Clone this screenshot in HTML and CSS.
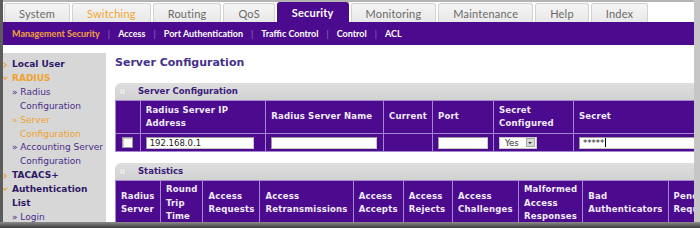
FILE: index.html
```html
<!DOCTYPE html>
<html>
<head>
<meta charset="utf-8">
<link rel="stylesheet" href="styles.css">
</head>
<body>
<div class="frame">
  <nav class="tabs">
    <span class="tab">System</span>
    <span class="tab tab-hot">Switching</span>
    <span class="tab">Routing</span>
    <span class="tab">QoS</span>
    <span class="tab tab-active">Security</span>
    <span class="tab">Monitoring</span>
    <span class="tab">Maintenance</span>
    <span class="tab">Help</span>
    <span class="tab">Index</span>
  </nav>
  <nav class="subnav">
    <span class="sub sub-active">Management Security</span><span class="sep">|</span>
    <span class="sub">Access</span><span class="sep">|</span>
    <span class="sub">Port Authentication</span><span class="sep">|</span>
    <span class="sub">Traffic Control</span><span class="sep">|</span>
    <span class="sub">Control</span><span class="sep">|</span>
    <span class="sub">ACL</span>
  </nav>
  <div class="body">
    <aside class="side">
      <div class="l1"><span class="arr arr-r"></span><span>Local User</span></div>
      <div class="l1 on"><span class="arr arr-d"></span><span>RADIUS</span></div>
      <div class="l2">» Radius Configuration</div>
      <div class="l2 on">» Server Configuration</div>
      <div class="l2">» Accounting Server Configuration</div>
      <div class="l1"><span class="arr arr-r"></span><span>TACACS+</span></div>
      <div class="l1"><span class="arr arr-d"></span><span>Authentication List</span></div>
      <div class="l2">» Login</div>
    </aside>
    <main class="main">
      <h1 class="title">Server Configuration</h1>
      <section class="box">
        <div class="box-head"><span class="grip"></span>Server Configuration</div>
        <table class="grid cfg">
          <colgroup>
            <col class="c-chk"><col class="c-ip"><col class="c-name"><col class="c-cur"><col class="c-port"><col class="c-sc"><col class="c-sec">
          </colgroup>
          <thead>
            <tr>
              <th></th>
              <th>Radius Server IP Address</th>
              <th>Radius Server Name</th>
              <th>Current</th>
              <th>Port</th>
              <th>Secret Configured</th>
              <th>Secret</th>
            </tr>
          </thead>
          <tbody>
            <tr class="row">
              <td class="center"><input type="checkbox" class="chk"></td>
              <td><span class="field f-ip">192.168.0.1</span></td>
              <td><span class="field f-name"></span></td>
              <td></td>
              <td><span class="field f-port"></span></td>
              <td><span class="select"><span class="sel-text">Yes</span><span class="sel-btn"></span></span></td>
              <td><span class="field f-sec">*****<span class="caret"></span></span></td>
            </tr>
          </tbody>
        </table>
      </section>
      <section class="box box-stats">
        <div class="box-head"><span class="grip"></span>Statistics</div>
        <table class="grid stats">
          <colgroup>
            <col class="s1"><col class="s2"><col class="s3"><col class="s4"><col class="s5"><col class="s6"><col class="s7"><col class="s8"><col class="s9"><col class="s10">
          </colgroup>
          <thead>
            <tr>
              <th>Radius Server</th>
              <th>Round Trip Time</th>
              <th>Access Requests</th>
              <th>Access Retransmissions</th>
              <th>Access Accepts</th>
              <th>Access Rejects</th>
              <th>Access Challenges</th>
              <th>Malformed Access Responses</th>
              <th>Bad Authenticators</th>
              <th>Pending Requests</th>
            </tr>
          </thead>
        </table>
      </section>
    </main>
  </div>
</div>
<div class="shadow"></div>
</body>
</html>
```
FILE: styles.css
```css
html, body {
  margin: 0;
  padding: 0;
  background: #ffffff;
}

.frame {
  height: 222px;
  overflow: hidden;
  box-sizing: border-box;
  border-left: 3px solid #5c5c5c;
  border-right: 6px solid #c6c6c6;
  background: #ffffff;
  display: flex;
  flex-direction: column;
}

.shadow {
  height: 6px;
  background: linear-gradient(#8c8c8c, #3c3c3c);
}

/* top tabs */
.tabs {
  display: flex;
  align-items: flex-end;
  height: 22px;
  box-sizing: border-box;
  padding-left: 1px;
  border-top: 2px solid #b4b4b4;
  gap: 2px;
  flex-shrink: 0;
}

.tab {
  height: 19px;
  line-height: 19px;
  padding: 0 14px;
  background: linear-gradient(#f5f5f5, #e8e8e8);
  border: 1px solid #d2d2d2;
  border-bottom: none;
  border-radius: 3px 3px 0 0;
  font-family: "Lato", "Open Sans", sans-serif;
  font-size: 11px;
  color: #6a6a6a;
  letter-spacing: 0.2px;
  box-sizing: border-box;
}

.tab-hot {
  color: #f3a52c;
}

.tab-active {
  background: #4c0b8e;
  border-color: #4c0b8e;
  color: #ffffff;
  height: 20px;
  font-weight: 700;
}

/* sub navigation */
.subnav {
  display: flex;
  align-items: center;
  gap: 8px;
  height: 23px;
  padding-left: 9px;
  background: #4c0b8e;
  font-family: "Lato", "Open Sans", sans-serif;
  font-size: 9px;
  font-weight: 700;
  color: #ffffff;
  flex-shrink: 0;
}

.sub-active {
  color: #f3a33c;
}

.sep {
  color: #8e76c0;
  font-weight: 400;
}

/* body */
.body {
  display: flex;
  flex: 1;
  min-height: 0;
}

.side {
  width: 103px;
  flex-shrink: 0;
  margin-top: 8px;
  padding-top: 5px;
  background: #d7d7d7;
  font-family: "DejaVu Sans", Verdana, sans-serif;
  font-size: 9px;
  line-height: 13.9px;
  color: #4a2c8a;
}

.l1 {
  font-weight: 700;
  color: #2f1866;
  display: flex;
  align-items: flex-start;
}

.l1.on {
  color: #f0a22c;
}

.arr {
  width: 9px;
  flex-shrink: 0;
  height: 13.9px;
  position: relative;
}

.arr::before {
  content: "";
  position: absolute;
  left: 0;
  top: 5px;
  width: 3px;
  height: 3px;
  border-right: 1.5px solid #f0a22c;
  border-bottom: 1.5px solid #f0a22c;
}

.arr-r::before {
  transform: rotate(-45deg);
  left: -1px;
}

.arr-d::before {
  transform: rotate(45deg);
  top: 3px;
}

.l2 {
  padding-left: 17px;
  text-indent: -8px;
  color: #4a2c8a;
}

.l2.on {
  color: #f0a22c;
}

.main {
  flex: 1;
  min-width: 0;
  overflow: hidden;
  padding-left: 9px;
}

.title {
  margin: 0;
  padding-top: 11px;
  font-family: "DejaVu Sans", Verdana, sans-serif;
  font-size: 11px;
  line-height: 14px;
  font-weight: 700;
  color: #45318c;
}

.box {
  margin-top: 13px;
  width: 600px;
}

.box-stats {
  margin-top: 11px;
  width: 640px;
}

.box-head {
  height: 17px;
  line-height: 17px;
  background: linear-gradient(#dedede, #d2d2d2);
  border-radius: 6px 0 0 0;
  font-family: "DejaVu Sans", Verdana, sans-serif;
  font-size: 8.5px;
  font-weight: 700;
  color: #3b1c7a;
  display: flex;
  align-items: center;
}

.grip {
  width: 5px;
  height: 5px;
  margin: 0 13px 0 5px;
  background-image: radial-gradient(circle, #f4f4f4 0.8px, transparent 1px);
  background-size: 2.5px 2.5px;
}

.grid {
  border-collapse: collapse;
  table-layout: fixed;
  font-family: "DejaVu Sans", Verdana, sans-serif;
  font-size: 8.5px;
  background: #4c0b8e;
}

.grid th,
.grid td {
  border: 1px solid #a286d0;
  padding: 0 5px;
  text-align: left;
  vertical-align: middle;
}

.grid th {
  color: #f1ebfa;
  font-weight: 700;
  line-height: 13.5px;
  letter-spacing: 0.2px;
}

.cfg th {
  height: 32px;
  padding-top: 0;
  padding-bottom: 0;
}

.stats th {
  padding-top: 2px;
  padding-bottom: 2px;
}

.c-chk { width: 26px; }
.c-ip { width: 129px; }
.c-name { width: 118px; }
.c-cur { width: 48px; }
.c-port { width: 61px; }
.c-sc { width: 87px; }
.c-sec { width: 131px; }

.s1 { width: 45px; }
.s2 { width: 41px; }
.s3 { width: 56px; }
.s4 { width: 92px; }
.s5 { width: 47px; }
.s6 { width: 50px; }
.s7 { width: 66px; }
.s8 { width: 63px; }
.s9 { width: 84px; }
.s10 { width: 96px; }

.row td {
  height: 17px;
  padding: 0 5px;
}

.center {
  text-align: center;
}

.chk {
  appearance: none;
  -webkit-appearance: none;
  display: block;
  margin: 0 auto;
  width: 11px;
  height: 11px;
  background: #ffffff;
  border: 1px solid #9c9c9c;
  box-shadow: inset 1px 1px 1px #c8c8c8;
  box-sizing: border-box;
}

.field {
  display: block;
  height: 12px;
  line-height: 11px;
  background: #ffffff;
  border: 1px solid #c9c9c9;
  border-top-color: #9a9a9a;
  border-left-color: #9a9a9a;
  box-sizing: border-box;
  padding-left: 3px;
  color: #1a1a1a;
  font-size: 8.5px;
  white-space: nowrap;
  overflow: hidden;
}

.f-ip { width: 108px; }
.f-name { width: 106px; }
.f-port { width: 50px; }
.f-sec { width: 130px; }

.caret {
  display: inline-block;
  width: 1px;
  height: 9px;
  background: #000000;
  vertical-align: -1px;
  margin-left: 1px;
}

.select {
  display: flex;
  align-items: center;
  width: 38px;
  height: 12px;
  background: #ffffff;
  border: 1px solid #c9c9c9;
  box-sizing: border-box;
  color: #333333;
  font-size: 8.5px;
}

.sel-text {
  flex: 1;
  padding-left: 5px;
  line-height: 10px;
}

.sel-btn {
  width: 9px;
  height: 9px;
  margin-right: 1px;
  background: #d8d8d8;
  border: 1px solid #a8a8a8;
  box-sizing: border-box;
  position: relative;
}

.sel-btn::after {
  content: "";
  position: absolute;
  left: 1.5px;
  top: 2.5px;
  border-left: 2px solid transparent;
  border-right: 2px solid transparent;
  border-top: 2px solid #333333;
}
```
